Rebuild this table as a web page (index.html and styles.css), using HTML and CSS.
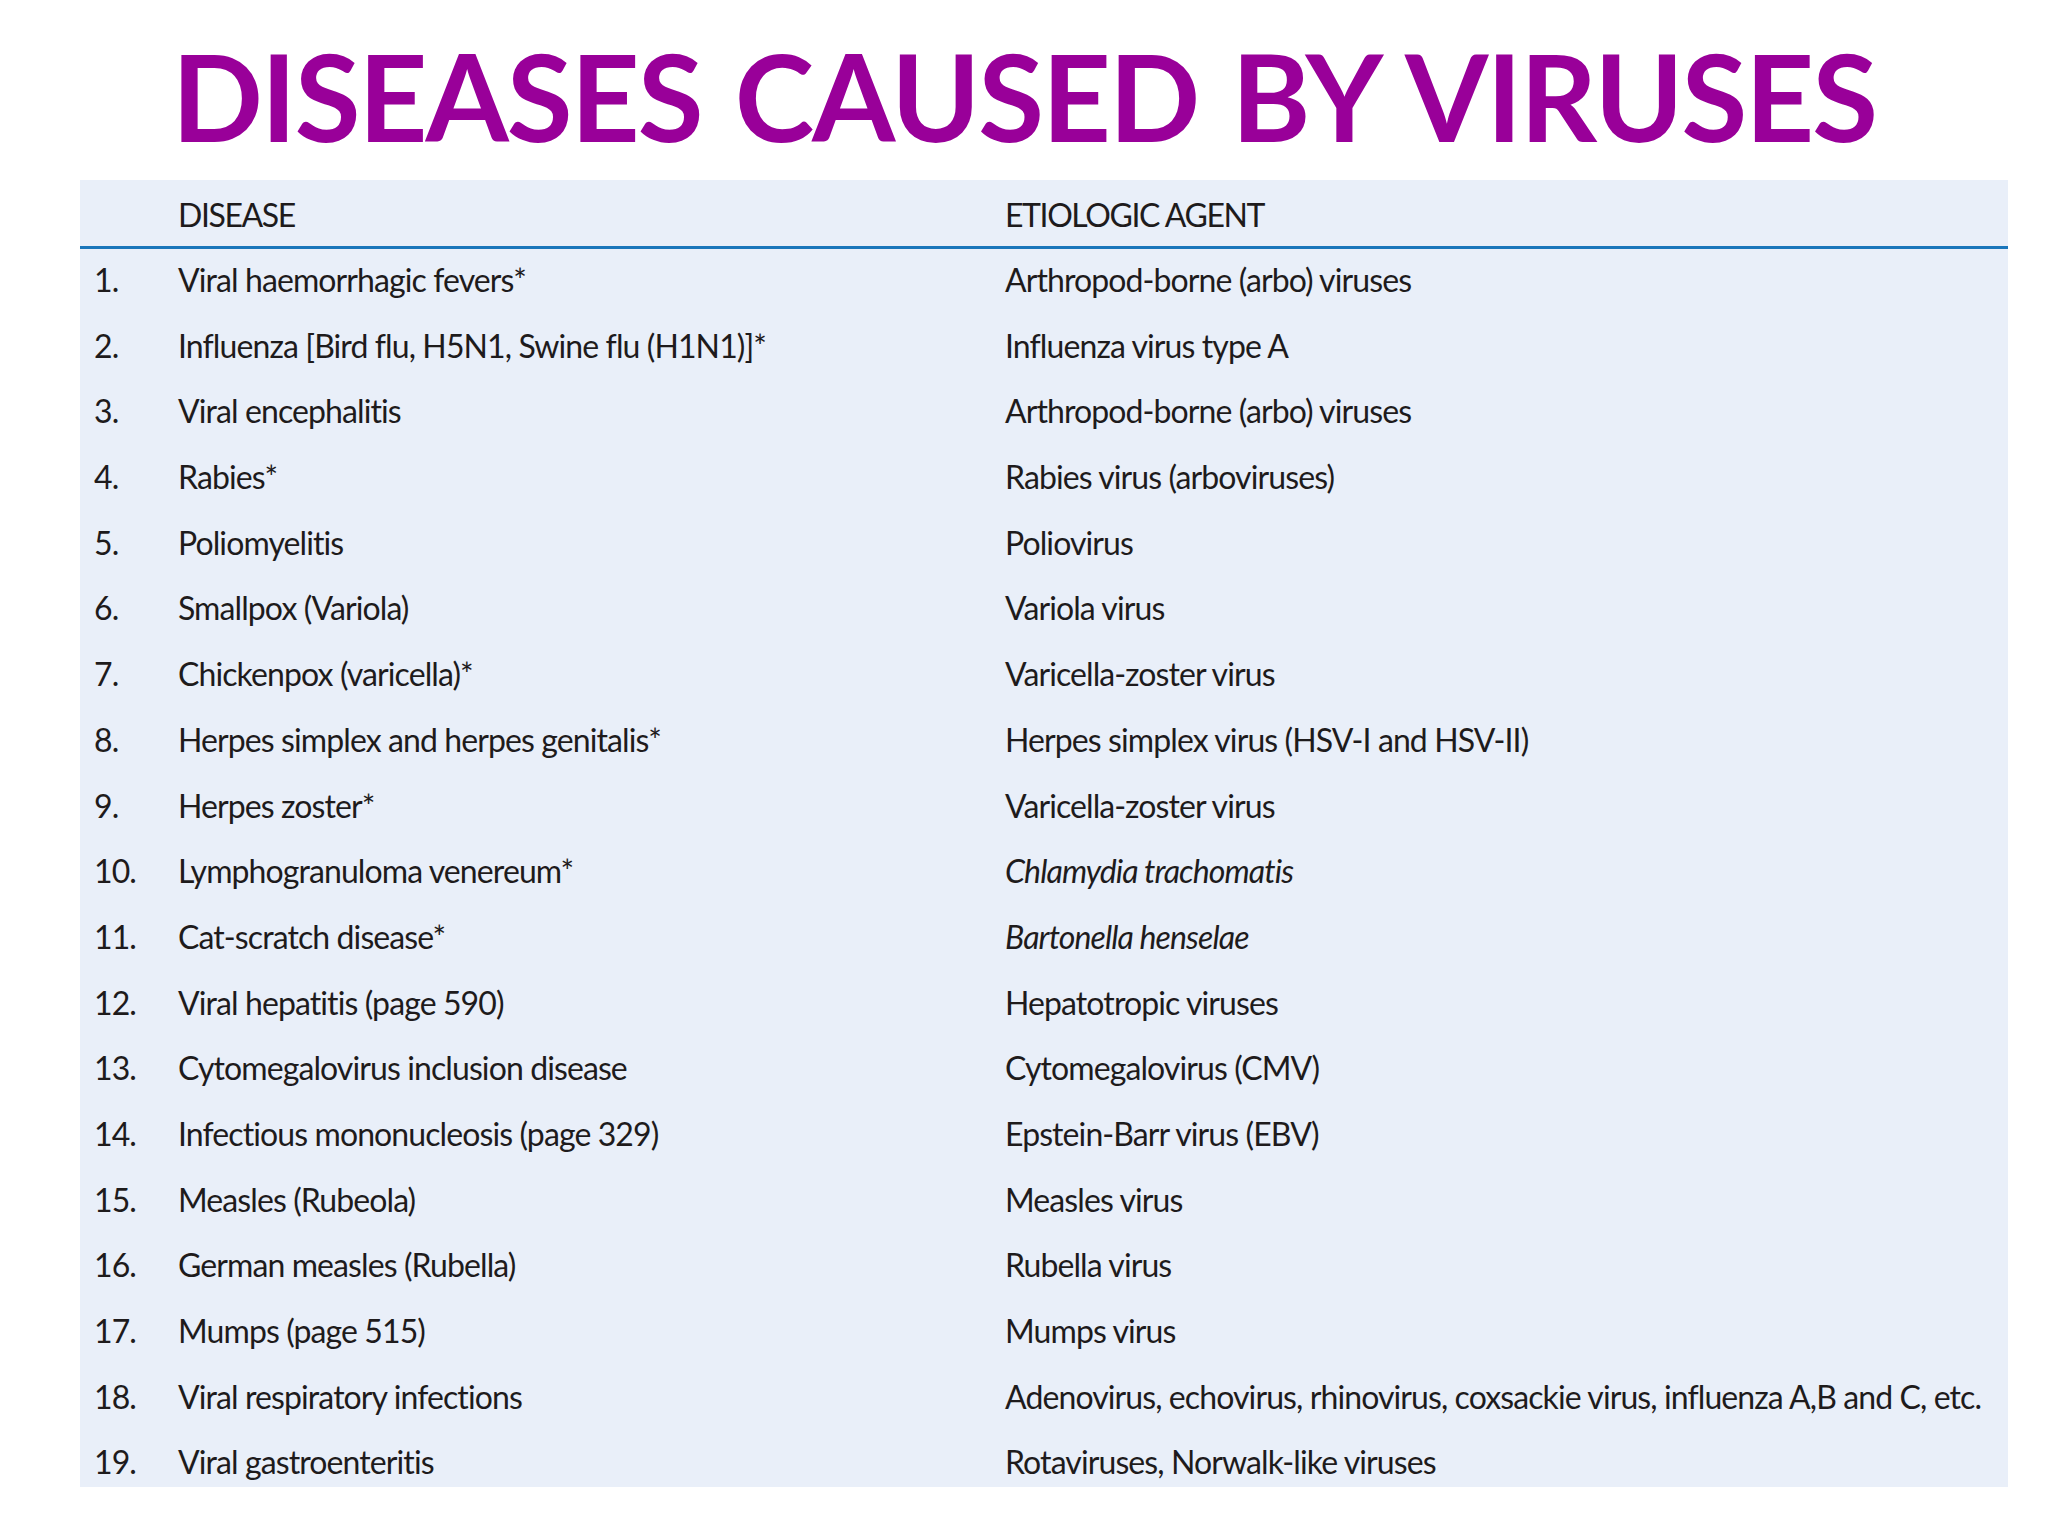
FILE: index.html
```html
<!DOCTYPE html>
<html lang="en">
<head>
<meta charset="utf-8">
<title>Diseases caused by viruses</title>
<link rel="stylesheet" href="styles.css">
</head>
<body>
<h1 class="title">DISEASES CAUSED BY VIRUSES</h1>
<div class="table">
  <div class="row head"><span class="num"></span><span>DISEASE</span><span>ETIOLOGIC AGENT</span></div>
  <div class="row"><span class="num">1.</span><span>Viral haemorrhagic fevers*</span><span>Arthropod-borne (arbo) viruses</span></div>
  <div class="row"><span class="num">2.</span><span>Influenza [Bird flu, H5N1, Swine flu (H1N1)]*</span><span>Influenza virus type A</span></div>
  <div class="row"><span class="num">3.</span><span>Viral encephalitis</span><span>Arthropod-borne (arbo) viruses</span></div>
  <div class="row"><span class="num">4.</span><span>Rabies*</span><span>Rabies virus (arboviruses)</span></div>
  <div class="row"><span class="num">5.</span><span>Poliomyelitis</span><span>Poliovirus</span></div>
  <div class="row"><span class="num">6.</span><span>Smallpox (Variola)</span><span>Variola virus</span></div>
  <div class="row"><span class="num">7.</span><span>Chickenpox (varicella)*</span><span>Varicella-zoster virus</span></div>
  <div class="row"><span class="num">8.</span><span>Herpes simplex and herpes genitalis*</span><span>Herpes simplex virus (HSV-I and HSV-II)</span></div>
  <div class="row"><span class="num">9.</span><span>Herpes zoster*</span><span>Varicella-zoster virus</span></div>
  <div class="row"><span class="num">10.</span><span>Lymphogranuloma venereum*</span><span class="it">Chlamydia trachomatis</span></div>
  <div class="row"><span class="num">11.</span><span>Cat-scratch disease*</span><span class="it">Bartonella henselae</span></div>
  <div class="row"><span class="num">12.</span><span>Viral hepatitis (page 590)</span><span>Hepatotropic viruses</span></div>
  <div class="row"><span class="num">13.</span><span>Cytomegalovirus inclusion disease</span><span>Cytomegalovirus (CMV)</span></div>
  <div class="row"><span class="num">14.</span><span>Infectious mononucleosis (page 329)</span><span>Epstein-Barr virus (EBV)</span></div>
  <div class="row"><span class="num">15.</span><span>Measles (Rubeola)</span><span>Measles virus</span></div>
  <div class="row"><span class="num">16.</span><span>German measles (Rubella)</span><span>Rubella virus</span></div>
  <div class="row"><span class="num">17.</span><span>Mumps (page 515)</span><span>Mumps virus</span></div>
  <div class="row"><span class="num">18.</span><span>Viral respiratory infections</span><span>Adenovirus, echovirus, rhinovirus, coxsackie virus, influenza A,B and C, etc.</span></div>
  <div class="row"><span class="num">19.</span><span>Viral gastroenteritis</span><span>Rotaviruses, Norwalk-like viruses</span></div>
</div>
</body>
</html>
```

FILE: styles.css
```css
html, body {
  margin: 0;
  padding: 0;
  background: #ffffff;
}

body {
  font-family: Lato, "Open Sans", sans-serif;
  color: #1e1b1c;
  width: 2048px;
  height: 1536px;
  overflow: hidden;
}

.title {
  margin: 0;
  height: 180px;
  box-sizing: border-box;
  padding-top: 36px;
  font-family: Lato, "Open Sans", sans-serif;
  font-weight: 700;
  font-size: 120px;
  line-height: 1;
  letter-spacing: -2px;
  word-spacing: 6px;
  color: #990099;
  text-align: center;
  white-space: nowrap;
}

.table {
  margin-left: 80px;
  width: 1928px;
  height: 1307px;
  background: #e9eff9;
  overflow: hidden;
}

.row {
  display: grid;
  grid-template-columns: 84px 827px 1fr;
  padding-left: 14px;
  height: 65.7px;
  font-size: 32px;
  line-height: 61.3px;
  letter-spacing: -0.9px;
  white-space: nowrap;
}

.row.head {
  box-sizing: border-box;
  padding-top: 4px;
  line-height: 62px;
  letter-spacing: -1.4px;
  border-bottom: 3px solid #1a76bb;
  height: 69px;
}

.it {
  font-style: italic;
}
```
